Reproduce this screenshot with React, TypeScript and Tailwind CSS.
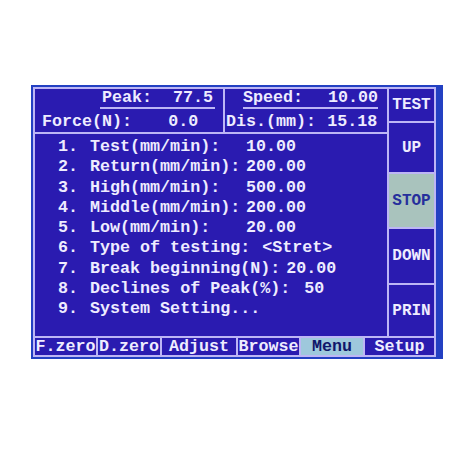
import React from "react";

const mono = { fontFamily: '"Liberation Mono", "DejaVu Sans Mono", monospace' };

const rowsA: [string, string, string][] = [
  ["1.", "Test(mm/min):", "10.00"],
  ["2.", "Return(mm/min):", "200.00"],
  ["3.", "High(mm/min):", "500.00"],
  ["4.", "Middle(mm/min):", "200.00"],
  ["5.", "Low(mm/min):", "20.00"],
];

export default function App() {
  return (
    <div className="w-[474px] h-[474px] bg-white pt-[85px] pl-[31px]">
      <div className="w-[412px] h-[274px] bg-[#2340c2] pt-[2px] pl-[2px] pr-[7px] pb-[2px]">
        <div
          className="w-full h-full border-2 border-[#bdb6f5] bg-[#2a1bb0] flex flex-col text-[#eeecff] font-bold text-[16.7px]"
          style={mono}
        >
          {/* top section */}
          <div className="flex flex-1 min-h-0">
            {/* left area */}
            <div className="w-[352px] flex flex-col">
              {/* header */}
              <div className="h-[45px] border-b-2 border-[#bdb6f5] flex">
                <div className="w-[190px] border-r-2 border-[#bdb6f5] flex flex-col">
                  <div className="h-[22px]">
                    <div className="ml-[65px] w-[115px] h-[20px] border-b-2 border-[#bdb6f5] flex justify-between px-[2px] leading-[18px]">
                      <span>Peak:</span>
                      <span>77.5</span>
                    </div>
                  </div>
                  <div className="h-[21px] leading-[21px] pl-[7px] flex whitespace-pre">
                    <span>Force(N):</span>
                    <span className="ml-[36px]">0.0</span>
                  </div>
                </div>
                <div className="flex-1 flex flex-col">
                  <div className="h-[22px]">
                    <div className="ml-[18px] w-[135px] h-[20px] border-b-2 border-[#bdb6f5] flex justify-between leading-[18px]">
                      <span>Speed:</span>
                      <span>10.00</span>
                    </div>
                  </div>
                  <div className="h-[21px] leading-[21px] pl-[1px] flex whitespace-pre">
                    <span>Dis.(mm):</span>
                    <span className="ml-[11px]">15.18</span>
                  </div>
                </div>
              </div>
              {/* list */}
              <div className="flex flex-col pt-[3px] pl-[23px] whitespace-pre">
                {rowsA.map(([n, l, v]) => (
                  <div key={n} className="h-[20.3px] leading-[20.3px] flex">
                    <span className="w-[32px]">{n}</span>
                    <span className="w-[156px]">{l}</span>
                    <span>{v}</span>
                  </div>
                ))}
                <div className="h-[20.3px] leading-[20.3px] flex">
                  <span className="w-[32px]">6.</span>
                  <span>Type of testing:</span>
                  <span className="ml-[12px]">&lt;Stret&gt;</span>
                </div>
                <div className="h-[20.3px] leading-[20.3px] flex">
                  <span className="w-[32px]">7.</span>
                  <span>Break beginning(N):</span>
                  <span className="ml-[6px]">20.00</span>
                </div>
                <div className="h-[20.3px] leading-[20.3px] flex">
                  <span className="w-[32px]">8.</span>
                  <span>Declines of Peak(%):</span>
                  <span className="ml-[14px]">50</span>
                </div>
                <div className="h-[20.3px] leading-[20.3px] flex">
                  <span className="w-[32px]">9.</span>
                  <span>System Setting...</span>
                </div>
              </div>
            </div>
            {/* right column */}
            <div className="flex-1 border-l-2 border-[#bdb6f5] flex flex-col text-[16px]">
              <div className="h-[34px] border-b-2 border-[#bdb6f5] flex items-center justify-center">TEST</div>
              <div className="h-[51px] border-b-2 border-[#bdb6f5] flex items-center justify-center">UP</div>
              <div className="h-[55px] border-b-2 border-[#bdb6f5] bg-[#a9c3bd] text-[#262f9c] flex items-center justify-center">STOP</div>
              <div className="h-[56px] border-b-2 border-[#bdb6f5] flex items-center justify-center">DOWN</div>
              <div className="flex-1 flex items-center justify-center">PRIN</div>
            </div>
          </div>
          {/* bottom bar */}
          <div className="h-[19px] border-t-2 border-[#bdb6f5] flex leading-[17px] whitespace-pre">
            <div className="w-[63px] border-r-2 border-[#bdb6f5] flex justify-center">F.zero</div>
            <div className="w-[64px] border-r-2 border-[#bdb6f5] flex justify-center">D.zero</div>
            <div className="w-[76px] border-r-2 border-[#bdb6f5] flex justify-center">Adjust</div>
            <div className="w-[63px] border-r-2 border-[#bdb6f5] flex justify-center">Browse</div>
            <div className="w-[64px] border-r-2 border-[#bdb6f5] bg-[#9ec8dc] text-[#10176a] flex justify-center">Menu</div>
            <div className="flex-1 flex justify-center">Setup</div>
          </div>
        </div>
      </div>
    </div>
  );
}
